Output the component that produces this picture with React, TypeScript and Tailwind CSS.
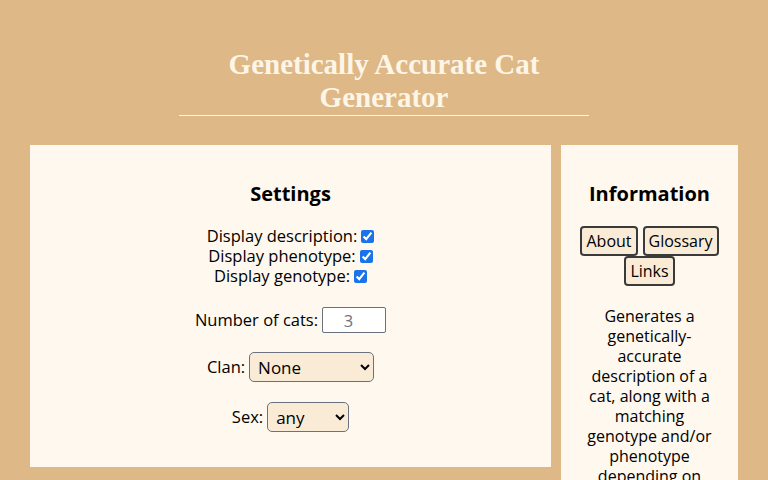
import React from "react";

const font = { fontFamily: '"Open Sans", Lato, sans-serif' };

function Check({ label }: { label: string }) {
  return (
    <div className="flex items-center justify-center h-5 leading-5">
      <span>{label}</span>
      <input type="checkbox" defaultChecked className="ml-[4px] w-[13px] h-[13px] accent-[#1a73e8]" />
    </div>
  );
}

export default function App() {
  return (
    <div className="min-h-screen bg-[#deb887] text-black overflow-hidden" style={font}>
      <header className="flex justify-center pt-[48px]">
        <h1
          className="w-[410px] text-center text-[29px] leading-[33px] font-bold text-[#fdf5e6] border-b border-[#fdf5e6] pb-px"
          style={{ fontFamily: '"Liberation Serif", serif' }}
        >
          Genetically Accurate Cat Generator
        </h1>
      </header>

      <main className="flex gap-[10px] px-[30px] mt-[29px] items-start">
        {/* Settings */}
        <section className="w-[521px] h-[322px] bg-[#fff8ee] flex flex-col items-center text-[16.5px]">
          <h2 className="text-[20px] font-bold mt-[35px] leading-[28px]">Settings</h2>
          <div className="mt-[18px] flex flex-col">
            <Check label="Display description:" />
            <Check label="Display phenotype:" />
            <Check label="Display genotype:" />
          </div>
          <div className="mt-[21px] flex items-center gap-[4px]">
            <span>Number of cats:</span>
            <input
              type="number"
              defaultValue={3}
              className="w-[64px] h-[26px] border border-gray-500 rounded-[2px] bg-white text-center text-gray-500 pl-[4px]"
            />
          </div>
          <div className="mt-[19px] flex items-center gap-[4px]">
            <span>Clan:</span>
            <select className="w-[125px] h-[30px] bg-[#faebd7] border border-gray-500 rounded-[5px] px-[4px] text-[17px]">
              <option>None</option>
            </select>
          </div>
          <div className="mt-[20px] flex items-center gap-[4px]">
            <span>Sex:</span>
            <select className="w-[82px] h-[30px] bg-[#faebd7] border border-gray-500 rounded-[5px] px-[4px] text-[17px]">
              <option>any</option>
            </select>
          </div>
        </section>

        {/* Information */}
        <aside className="w-[177px] h-[400px] bg-[#fff8ee] flex flex-col items-center text-[16px]">
          <h2 className="text-[20px] font-bold mt-[35px] leading-[28px]">Information</h2>
          <div className="mt-[18px] flex flex-wrap justify-center gap-x-[5px] w-[150px]">
            <button className="h-[30px] px-[4px] bg-[#faebd7] border-2 border-[#3a3a3a] rounded-[4px]">About</button>
            <button className="h-[30px] px-[4px] bg-[#faebd7] border-2 border-[#3a3a3a] rounded-[4px]">Glossary</button>
            <button className="h-[30px] px-[4px] bg-[#faebd7] border-2 border-[#3a3a3a] rounded-[4px]">Links</button>
          </div>
          <p className="mt-[20px] w-[140px] text-center leading-[20px]">
            Generates a genetically-accurate description of a cat, along with a matching genotype and/or phenotype depending on settings.
          </p>
        </aside>
      </main>
    </div>
  );
}
